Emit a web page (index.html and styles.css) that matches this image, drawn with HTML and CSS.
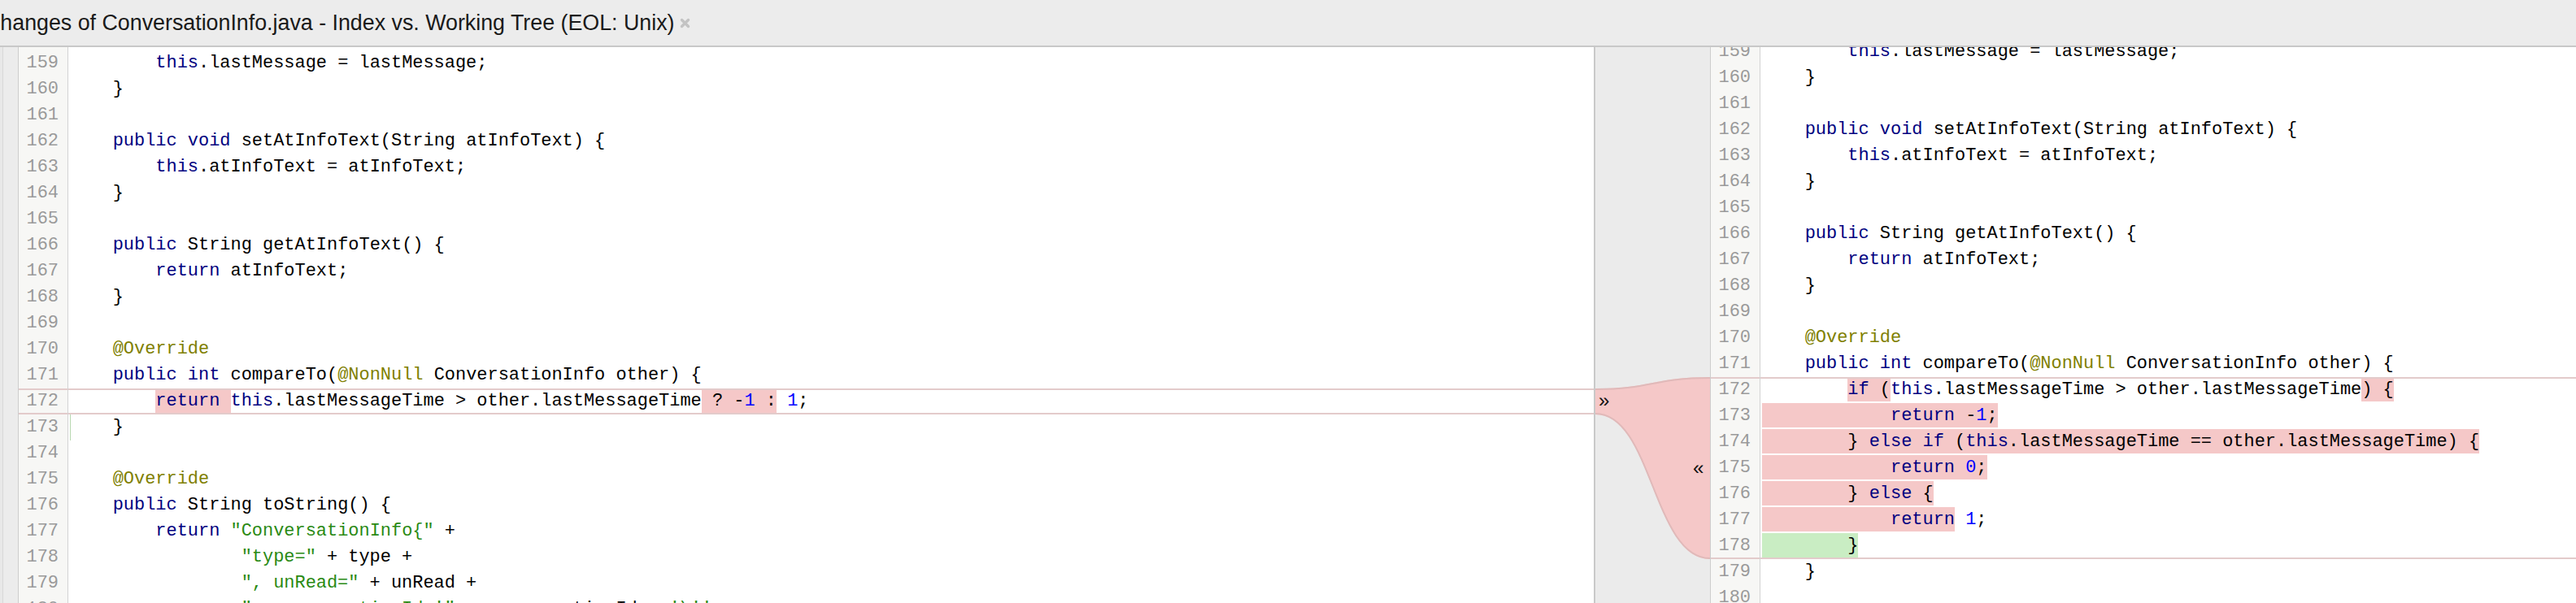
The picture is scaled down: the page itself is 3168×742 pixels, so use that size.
FILE: index.html
```html
<!DOCTYPE html>
<html lang="en">
<head>
    <meta charset="UTF-8">
    <title>Changes of ConversationInfo.java - Index vs. Working Tree</title>
    <link rel="stylesheet" href="styles.css">
</head>
<body>
    <div class="titlebar">
        <span class="title">Changes of ConversationInfo.java - Index vs. Working Tree (EOL: Unix)</span>
        <svg class="close" viewBox="0 0 13 13"><path d="M2.5 2.5 L10.5 10.5 M10.5 2.5 L2.5 10.5" stroke="#c3c3c3" stroke-width="3.4" stroke-linecap="round"/></svg>
    </div>

    <div class="compare">
        <!-- left side: index -->
        <div class="pane pane-left">
            <div class="strip"></div>
            <div class="numbers">
                <div class="lines-left">
                    <div class="row">159</div>
                    <div class="row">160</div>
                    <div class="row">161</div>
                    <div class="row">162</div>
                    <div class="row">163</div>
                    <div class="row">164</div>
                    <div class="row">165</div>
                    <div class="row">166</div>
                    <div class="row">167</div>
                    <div class="row">168</div>
                    <div class="row">169</div>
                    <div class="row">170</div>
                    <div class="row">171</div>
                    <div class="row sep-t sep-b">172</div>
                    <div class="row">173</div>
                    <div class="row">174</div>
                    <div class="row">175</div>
                    <div class="row">176</div>
                    <div class="row">177</div>
                    <div class="row">178</div>
                    <div class="row">179</div>
                    <div class="row">180</div>
                </div>
            </div>
            <div class="code">
                <div class="lines-left">
                    <div class="row">        <span class="k">this</span>.lastMessage = lastMessage;</div>
                    <div class="row">    }</div>
                    <div class="row"></div>
                    <div class="row">    <span class="k">public</span> <span class="k">void</span> setAtInfoText(String atInfoText) {</div>
                    <div class="row">        <span class="k">this</span>.atInfoText = atInfoText;</div>
                    <div class="row">    }</div>
                    <div class="row"></div>
                    <div class="row">    <span class="k">public</span> String getAtInfoText() {</div>
                    <div class="row">        <span class="k">return</span> atInfoText;</div>
                    <div class="row">    }</div>
                    <div class="row"></div>
                    <div class="row">    <span class="a">@Override</span></div>
                    <div class="row">    <span class="k">public</span> <span class="k">int</span> compareTo(<span class="a">@NonNull</span> ConversationInfo other) {</div>
                    <div class="row sep-t sep-b">        <span class="hl tall"><span class="k">return</span> </span><span class="k">this</span>.lastMessageTime &gt; other.lastMessageTime<span class="hl tall"> ? -<span class="n">1</span> :</span> <span class="n">1</span>;</div>
                    <div class="row touched">    }</div>
                    <div class="row"></div>
                    <div class="row">    <span class="a">@Override</span></div>
                    <div class="row">    <span class="k">public</span> String toString() {</div>
                    <div class="row">        <span class="k">return</span> <span class="s">"ConversationInfo{"</span> +</div>
                    <div class="row">                <span class="s">"type="</span> + type +</div>
                    <div class="row">                <span class="s">", unRead="</span> + unRead +</div>
                    <div class="row">                <span class="s">", conversationId='"</span> + conversationId + <span class="s">'\''</span> +</div>
                </div>
            </div>
        </div>

        <!-- connector between the two sides -->
        <div class="center">
            <svg width="141" height="684" viewBox="0 0 141 684">
                <path d="M0 420 C70 420 71 406 141 406 L141 630 C71 630 70 452 0 452 Z" fill="#f5c8c8"/>
                <path d="M0 421 C70 421 71 407 141 407" fill="none" stroke="#e0b9b9" stroke-width="2"/>
                <path d="M0 451 C70 451 71 629 141 629" fill="none" stroke="#e0b9b9" stroke-width="2"/>
                <text x="4" y="443" class="arrow">»</text>
                <text x="120" y="526" class="arrow">«</text>
            </svg>
        </div>

        <!-- right side: working tree -->
        <div class="pane pane-right">
            <div class="numbers">
                <div class="lines-right">
                    <div class="row">159</div>
                    <div class="row">160</div>
                    <div class="row">161</div>
                    <div class="row">162</div>
                    <div class="row">163</div>
                    <div class="row">164</div>
                    <div class="row">165</div>
                    <div class="row">166</div>
                    <div class="row">167</div>
                    <div class="row">168</div>
                    <div class="row">169</div>
                    <div class="row">170</div>
                    <div class="row">171</div>
                    <div class="row sep-t">172</div>
                    <div class="row">173</div>
                    <div class="row">174</div>
                    <div class="row">175</div>
                    <div class="row">176</div>
                    <div class="row">177</div>
                    <div class="row sep-b">178</div>
                    <div class="row">179</div>
                    <div class="row">180</div>
                </div>
            </div>
            <div class="code">
                <div class="lines-right">
                    <div class="row">        <span class="k">this</span>.lastMessage = lastMessage;</div>
                    <div class="row">    }</div>
                    <div class="row"></div>
                    <div class="row">    <span class="k">public</span> <span class="k">void</span> setAtInfoText(String atInfoText) {</div>
                    <div class="row">        <span class="k">this</span>.atInfoText = atInfoText;</div>
                    <div class="row">    }</div>
                    <div class="row"></div>
                    <div class="row">    <span class="k">public</span> String getAtInfoText() {</div>
                    <div class="row">        <span class="k">return</span> atInfoText;</div>
                    <div class="row">    }</div>
                    <div class="row"></div>
                    <div class="row">    <span class="a">@Override</span></div>
                    <div class="row">    <span class="k">public</span> <span class="k">int</span> compareTo(<span class="a">@NonNull</span> ConversationInfo other) {</div>
                    <div class="row sep-t">        <span class="hl"><span class="k">if</span> (</span><span class="k">this</span>.lastMessageTime &gt; other.lastMessageTime<span class="hl">) {</span></div>
                    <div class="row"><span class="hl">            <span class="k">return</span> -<span class="n">1</span>;</span></div>
                    <div class="row"><span class="hl">        } <span class="k">else</span> <span class="k">if</span> (<span class="k">this</span>.lastMessageTime == other.lastMessageTime) {</span></div>
                    <div class="row"><span class="hl">            <span class="k">return</span> <span class="n">0</span>;</span></div>
                    <div class="row"><span class="hl">        } <span class="k">else</span> {</span></div>
                    <div class="row"><span class="hl">            <span class="k">return</span></span> <span class="n">1</span>;</div>
                    <div class="row sep-b"><span class="hl add">        }</span></div>
                    <div class="row">    }</div>
                    <div class="row"></div>
                </div>
            </div>
        </div>
    </div>
</body>
</html>
```

FILE: styles.css
```css
body {
    margin: 0;
    background-color: #ebebeb;
    font-family: "Liberation Sans", Arial, sans-serif;
    overflow: hidden;
}
.titlebar {
    height: 56px;
    border-bottom: 2px solid #c8c8c8;
    background-color: #ececec;
    display: flex;
    align-items: center;
    gap: 7px;
    white-space: nowrap;
    overflow: hidden;
}
.title {
    margin-left: -19px;
    font-size: 26.8px;
    color: #1a1a1a;
}
.close {
    width: 13px;
    height: 13px;
    flex: none;
}
.compare {
    display: flex;
    height: 684px;
    overflow: hidden;
}
.pane {
    display: flex;
    overflow: hidden;
    background-color: #fff;
}
.pane-left {
    width: 1960px;
    flex: none;
}
.pane-right {
    flex: 1;
}
.strip {
    width: 22px;
    flex: none;
    background: linear-gradient(to right, #e8e8e8 3px, #d8d8d8 3px, #d8d8d8 4px, #ececec 4px);
}
.numbers {
    width: 60px;
    flex: none;
    background-color: #f7f7f5;
    border-left: 1px solid #cdcdcd;
    border-right: 1px solid #d3d3d3;
    color: #9a9a9a;
    text-align: right;
}
.numbers .row {
    padding-right: 11px;
}
.code {
    flex: 1;
    color: #000;
}
.code .row {
    padding-left: 2px;
}
.lines-left {
    padding-top: 4px;
}
.lines-right {
    margin-top: -10px;
}
.row {
    position: relative;
    height: 32px;
    line-height: 32px;
    white-space: pre;
    font-family: "Liberation Mono", "DejaVu Sans Mono", monospace;
    font-size: 21.95px;
}
.sep-t::before,
.sep-b::after {
    content: "";
    position: absolute;
    left: 0;
    right: 0;
    height: 2px;
    background-color: #e3cbcb;
}
.sep-t::before {
    top: 0;
}
.sep-b::after {
    bottom: 0;
}
.touched {
    background: linear-gradient(to right, transparent 2px, #b7d8b0 2px, #b7d8b0 3px, transparent 3px);
}
.hl {
    display: inline-block;
    height: 30px;
    vertical-align: top;
    background-color: #f5c8c8;
}
.hl.tall {
    height: 32px;
}
.hl.add {
    background-color: #c9edc3;
}
.k {
    color: #000080;
}
.a {
    color: #808000;
}
.s {
    color: #2a8a14;
}
.n {
    color: #0000ff;
}
.center {
    width: 141px;
    flex: none;
    border-left: 2px solid #c9c9c9;
    background-color: #ebebeb;
}
.center svg {
    display: block;
}
.arrow {
    font-family: "Liberation Sans", Arial, sans-serif;
    font-size: 24px;
    fill: #111;
}
```
